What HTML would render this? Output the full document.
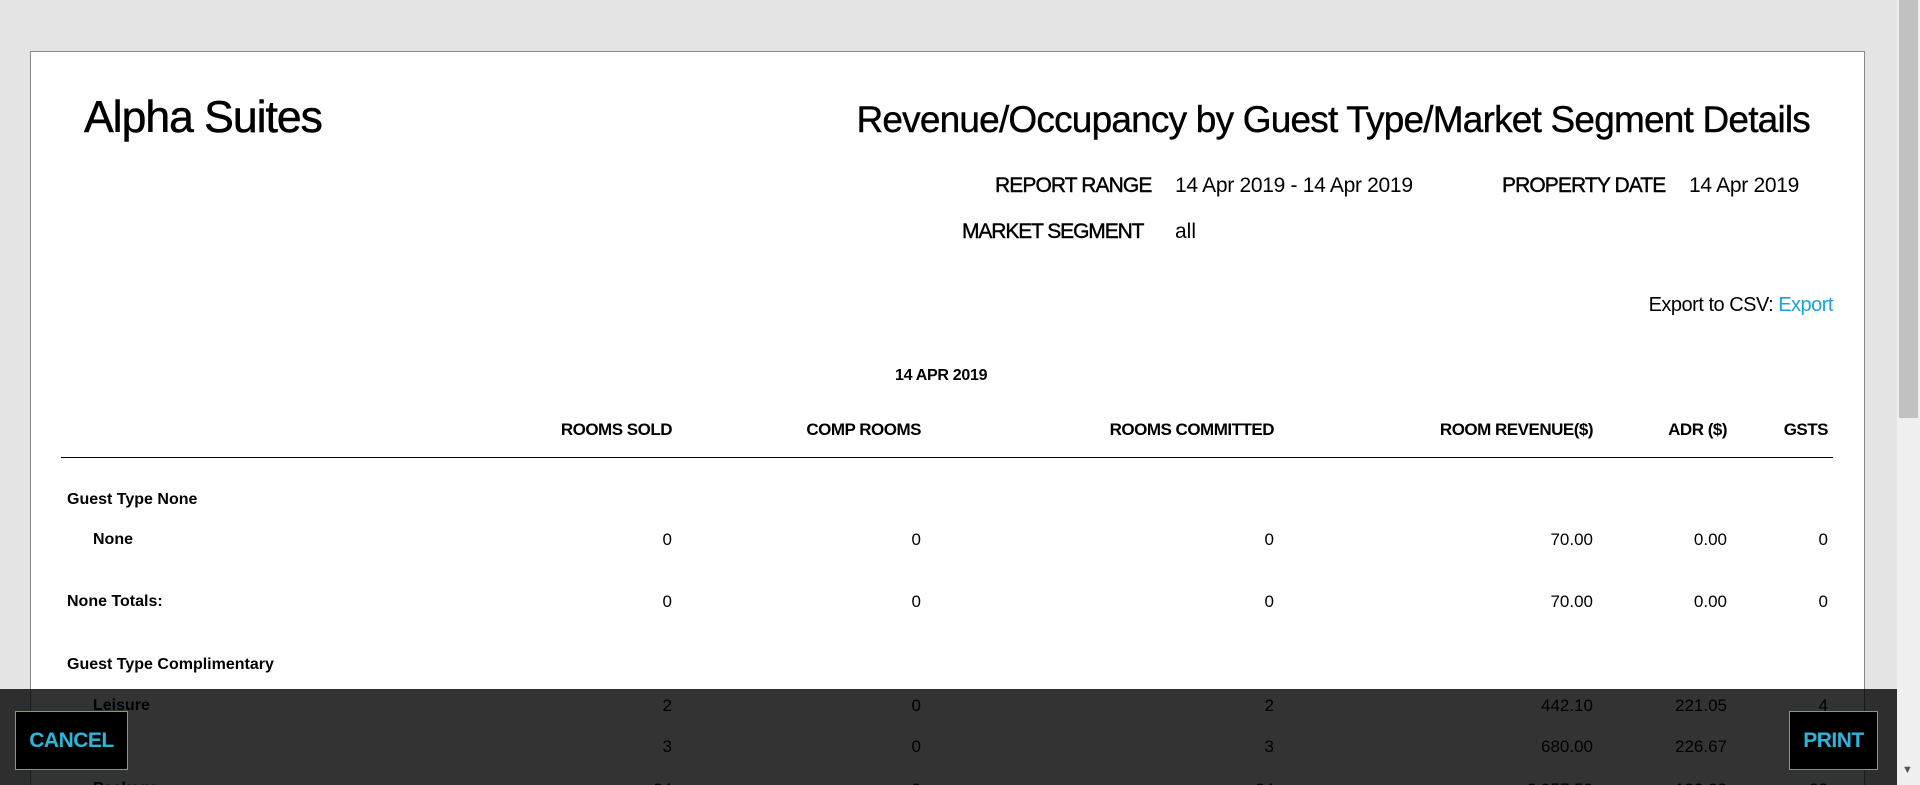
<!DOCTYPE html>
<html><head><meta charset="utf-8"><style>
*{margin:0;padding:0;box-sizing:border-box}
html,body{width:1920px;height:785px;overflow:hidden;background:#e5e5e5;font-family:"Liberation Sans",sans-serif;color:#000;position:relative}
.abs{position:absolute;white-space:nowrap;line-height:1}
#box{position:absolute;left:30px;top:51px;width:1835px;height:734px;background:#fff;border:1px solid #888;border-bottom:none}
.r{text-align:right}
.b{font-weight:bold}
.h{font-size:17px;font-weight:bold;letter-spacing:-0.5px}
.n{font-size:17px}
.lab{font-size:21px;letter-spacing:-0.9px;-webkit-text-stroke:0.4px #000}
#ov{position:absolute;left:0;top:689px;width:1897px;height:96px;background:rgba(0,0,0,0.8)}
.btn{position:absolute;top:711px;height:59px;background:#000;border:1px solid #2ab6dc;color:#2ab6dc;font-weight:bold;font-size:21px;display:flex;align-items:center;justify-content:center;letter-spacing:-0.5px}
#sb{position:absolute;left:1897px;top:0;width:23px;height:785px;background:#f0f0f0}
#th{position:absolute;left:1899px;top:0;width:19px;height:418px;background:#c1c1c1}
</style></head><body>
<div id="box"></div>
<div class="abs" style="left:84px;top:96px;font-size:44.5px;letter-spacing:-1px;-webkit-text-stroke:0.5px #000">Alpha Suites</div>
<div class="abs r" style="right:110px;top:101px;font-size:37px;letter-spacing:-0.8px;-webkit-text-stroke:0.4px #000">Revenue/Occupancy by Guest Type/Market Segment Details</div>
<div class="abs lab" style="left:995px;top:175px">REPORT RANGE</div>
<div class="abs" style="left:1175px;top:175px;font-size:21px;letter-spacing:-0.3px">14 Apr 2019 - 14 Apr 2019</div>
<div class="abs lab" style="left:1502px;top:175px">PROPERTY DATE</div>
<div class="abs" style="left:1689px;top:175px;font-size:21px;letter-spacing:-0.3px">14 Apr 2019</div>
<div class="abs lab" style="left:962px;top:221px;letter-spacing:-1.1px">MARKET SEGMENT</div>
<div class="abs" style="left:1175px;top:221px;font-size:21px">all</div>
<div class="abs r" style="right:87px;top:295px;font-size:20px;letter-spacing:-0.5px">Export to CSV: <span style="color:#1aa3d9">Export</span></div>
<div class="abs b" style="left:895px;top:368px;font-size:16px;letter-spacing:-0.3px">14 APR 2019</div>

<div class="abs h r" style="right:1248px;top:421px">ROOMS SOLD</div>
<div class="abs h r" style="right:999px;top:421px">COMP ROOMS</div>
<div class="abs h r" style="right:646px;top:421px">ROOMS COMMITTED</div>
<div class="abs h r" style="right:327px;top:421px">ROOM REVENUE($)</div>
<div class="abs h r" style="right:193px;top:421px">ADR ($)</div>
<div class="abs h r" style="right:92px;top:421px">GSTS</div>
<div class="abs" style="left:61px;top:457px;width:1772px;height:1px;background:#000"></div>

<div class="abs b" style="left:67px;top:492px;font-size:16px">Guest Type None</div>
<div class="abs b" style="left:93px;top:532px;font-size:16px">None</div>
<div class="abs b" style="left:67px;top:594px;font-size:16px">None Totals:</div>
<div class="abs b" style="left:67px;top:657px;font-size:16px">Guest Type Complimentary</div>
<div class="abs b" style="left:93px;top:698px;font-size:16px">Leisure</div>
<div class="abs b" style="left:93px;top:781px;font-size:16px">Package</div>

<div id="rows"></div>
<script>
var rows=[[531,["0","0","0","70.00","0.00","0"]],[593,["0","0","0","70.00","0.00","0"]],[697,["2","0","2","442.10","221.05","4"]],[738,["3","0","3","680.00","226.67","6"]],[781,["24","0","24","2,957.50","123.23","33"]]];
var rt=[1248,999,646,327,193,92];var h="";
rows.forEach(function(r){r[1].forEach(function(v,i){h+='<div class="abs n r" style="right:'+rt[i]+'px;top:'+r[0]+'px">'+v+'</div>';});});
document.getElementById("rows").innerHTML=h;
</script>
<div id="ov"></div>
<div class="btn" style="left:15px;width:113px">CANCEL</div>
<div class="btn" style="left:1789px;width:89px">PRINT</div>
<div id="sb"></div><div id="th"></div>
<div class="abs" style="left:1902px;top:765px;font-size:11px;color:#555">▼</div>
</body></html>
